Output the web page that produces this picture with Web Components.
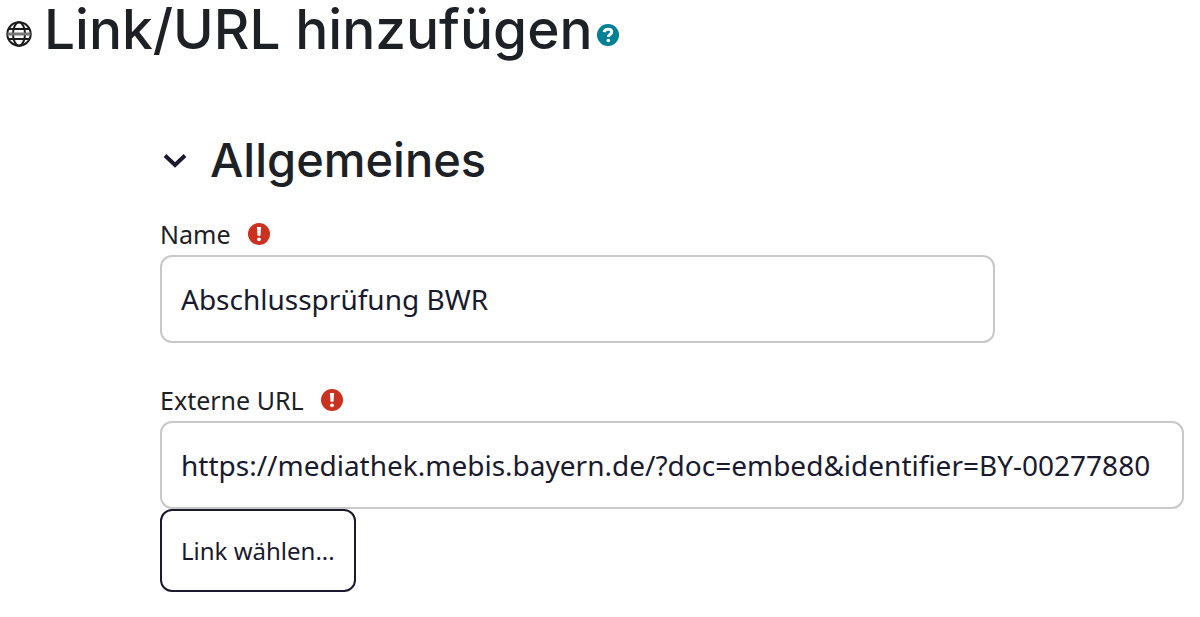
<!DOCTYPE html>
<html lang="de">
<head>
<meta charset="utf-8">
<meta name="viewport" content="width=device-width, initial-scale=1">
<title>Link/URL hinzufügen</title>
<style>
  body {
    --heading-font: Inter, "Noto Sans", sans-serif;
    --ink: #1a1a2e;
    margin: 0;
    background: #fff;
    color: #1d2125;
    font-family: "Noto Sans", sans-serif;
    font-size: 25px;
  }
</style>
</head>
<body>
<page-header>Link/URL hinzufügen</page-header>
<form-section heading="Allgemeines">
  <text-field label="Name" value="Abschlussprüfung BWR" narrow></text-field>
  <text-field label="Externe URL" value="https://mediathek.mebis.bayern.de/?doc=embed&amp;identifier=BY-00277880">
    <link-picker>Link wählen...</link-picker>
  </text-field>
</form-section>

<script>
class PageHeader extends HTMLElement {
  constructor() {
    super();
    this.attachShadow({ mode: "open" });
  }

  connectedCallback() {
    this.shadowRoot.innerHTML = `
      <style>
        :host {
          display: flex;
          align-items: center;
          padding: 0 6px;
        }
        .globe {
          flex: none;
          width: 26px;
          height: 26px;
          margin: 10px 12px 0 0;
        }
        h1 {
          margin: 0;
          font-family: var(--heading-font);
          font-size: 55px;
          font-weight: 450;
          line-height: 58px;
        }
        button {
          display: flex;
          margin: 12px 0 0 4px;
          padding: 0;
          border: 0;
          background: none;
          color: #008196;
        }
      </style>
      <svg class="globe" viewBox="0 0 26 26" fill="none" stroke="#1b1b1b" stroke-width="2" aria-hidden="true">
        <circle cx="13" cy="13" r="11.7"/>
        <ellipse cx="13" cy="13" rx="6" ry="11.7"/>
        <path d="M3 8h20M3 18h20"/>
        <path d="M1.5 13h23" stroke="#777" stroke-width="3"/>
      </svg>
      <h1><slot></slot></h1>
      <button type="button" aria-label="Hilfe">
        <svg width="22" height="22" viewBox="0 0 22 22" aria-hidden="true">
          <circle cx="11" cy="11" r="11" fill="currentColor"/>
          <path d="M7 8.1C7.6 6.2 9 5.2 11 5.2c2.2 0 3.7 1.1 3.7 2.9 0 2.4-3.4 2.4-3.4 4.9" fill="none" stroke="#fff" stroke-width="3"/>
          <circle cx="11.3" cy="16.5" r="1.8" fill="#fff"/>
        </svg>
      </button>
    `;
  }
}

class FormSection extends HTMLElement {
  constructor() {
    super();
    this.attachShadow({ mode: "open" });
  }

  connectedCallback() {
    this.shadowRoot.innerHTML = `
      <style>
        :host {
          display: block;
          padding: 72px 16px 24px 160px;
        }
        header {
          display: flex;
          align-items: center;
          gap: 20px;
          margin-bottom: 28px;
        }
        button {
          display: flex;
          padding: 0;
          border: 0;
          background: none;
          color: var(--ink);
        }
        h2 {
          margin: 0;
          font-family: var(--heading-font);
          font-size: 47px;
          font-weight: 450;
          line-height: 60px;
        }
        .fields {
          display: grid;
          gap: 41px;
        }
      </style>
      <header>
        <button type="button" aria-expanded="true" aria-label="Einklappen">
          <svg width="30" height="30" viewBox="0 0 30 30" fill="none" stroke="currentColor" stroke-width="4" aria-hidden="true">
            <path d="M5 10.5l10 9.5 10-9.5"/>
          </svg>
        </button>
        <h2></h2>
      </header>
      <div class="fields"><slot></slot></div>
    `;
    this.shadowRoot.querySelector("h2").textContent = this.getAttribute("heading");
  }
}

class TextField extends HTMLElement {
  constructor() {
    super();
    this.attachShadow({ mode: "open" });
  }

  connectedCallback() {
    this.shadowRoot.innerHTML = `
      <style>
        :host {
          display: block;
        }
        .label {
          display: flex;
          align-items: center;
          gap: 17px;
          margin-bottom: 5px;
        }
        label {
          line-height: 32px;
        }
        input {
          display: block;
          box-sizing: border-box;
          width: 100%;
          height: 88px;
          padding: 0 19px;
          border: 2px solid #c8c8c8;
          border-radius: 12px;
          background: #fff;
          color: var(--ink);
          font-family: inherit;
          font-size: 28px;
        }
        :host([narrow]) input {
          max-width: 835px;
        }
      </style>
      <div class="label">
        <label for="field"></label>
        <svg width="22" height="22" viewBox="0 0 22 22" role="img" aria-label="Erforderlich">
          <circle cx="11" cy="11" r="11" fill="#ca3120"/>
          <path d="M8.9 4h4.2l-.6 8.8h-3z" fill="#fff"/>
          <circle cx="11" cy="16.3" r="1.9" fill="#fff"/>
        </svg>
      </div>
      <input id="field" type="text" required>
      <slot></slot>
    `;
    this.shadowRoot.querySelector("label").textContent = this.getAttribute("label");
    this.shadowRoot.querySelector("input").value = this.getAttribute("value");
  }
}

class LinkPicker extends HTMLElement {
  constructor() {
    super();
    this.attachShadow({ mode: "open" });
  }

  connectedCallback() {
    this.shadowRoot.innerHTML = `
      <style>
        :host {
          display: block;
        }
        button {
          height: 83px;
          padding: 0 19px;
          border: 2px solid var(--ink);
          border-radius: 12px;
          background: #fff;
          color: var(--ink);
          font-family: inherit;
          font-size: 24px;
        }
      </style>
      <button type="button"><slot></slot></button>
    `;
  }
}

customElements.define("page-header", PageHeader);
customElements.define("form-section", FormSection);
customElements.define("text-field", TextField);
customElements.define("link-picker", LinkPicker);
</script>
</body>
</html>
